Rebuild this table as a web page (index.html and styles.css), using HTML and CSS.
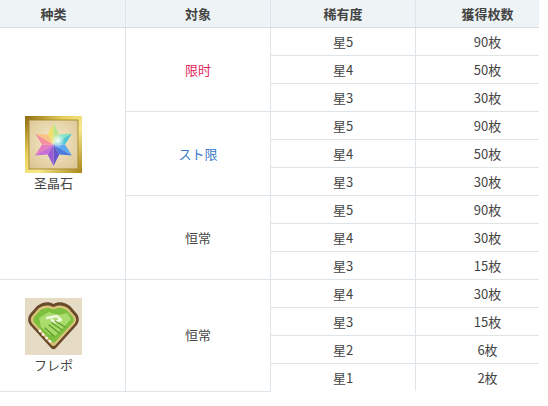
FILE: index.html
```html
<!DOCTYPE html>
<html lang="zh">
<head>
<meta charset="utf-8">
<link rel="stylesheet" href="styles.css">
</head>
<body>
<div class="wrap">
<table class="tbl">
<colgroup><col class="c1"><col class="c2"><col class="c3"><col class="c4"></colgroup>
<thead>
<tr><th>种类</th><th>対象</th><th>稀有度</th><th>獲得枚数</th></tr>
</thead>
<tbody>
<tr>
<td rowspan="9" class="item">
<div class="icon">
<svg width="57" height="57" viewBox="0 0 57 57">
<defs>
<linearGradient id="gold" x1="0" y1="0" x2="1" y2="1">
<stop offset="0" stop-color="#8a6a12"/><stop offset="0.35" stop-color="#e8cf5a"/><stop offset="0.6" stop-color="#f7e98e"/><stop offset="1" stop-color="#a88414"/>
</linearGradient>
<radialGradient id="bg1" cx="0.5" cy="0.45" r="0.7">
<stop offset="0" stop-color="#f6ecd0"/><stop offset="1" stop-color="#dcc592"/>
</radialGradient>
<radialGradient id="shine" cx="0.58" cy="0.45" r="0.3">
<stop offset="0" stop-color="#ffffff" stop-opacity="0.95"/><stop offset="1" stop-color="#ffffff" stop-opacity="0"/>
</radialGradient>
</defs>
<rect x="0" y="0" width="57" height="57" fill="url(#gold)"/>
<rect x="4" y="4" width="49" height="49" fill="url(#bg1)"/>
<rect x="4" y="4" width="49" height="49" fill="none" stroke="#9c7e22" stroke-width="0.8"/>
<g>
<polygon points="28.5,7 22.7,18.5 28.5,28.5" fill="#efe06e"/>
<polygon points="28.5,7 34.3,18.5 28.5,28.5" fill="#b6e58c"/>
<polygon points="47,17.5 34.3,18.5 28.5,28.5" fill="#86e2c4"/>
<polygon points="47,17.5 40,28.5 28.5,28.5" fill="#4cc6d6"/>
<polygon points="47,39.5 40,28.5 28.5,28.5" fill="#5aa8ee"/>
<polygon points="47,39.5 34.3,38.5 28.5,28.5" fill="#4a7ce0"/>
<polygon points="28.5,50 34.3,38.5 28.5,28.5" fill="#6656cc"/>
<polygon points="28.5,50 22.7,38.5 28.5,28.5" fill="#9a5cd2"/>
<polygon points="10,39.5 22.7,38.5 28.5,28.5" fill="#c46ed6"/>
<polygon points="10,39.5 17,28.5 28.5,28.5" fill="#e47cc0"/>
<polygon points="10,17.5 17,28.5 28.5,28.5" fill="#f290a0"/>
<polygon points="10,17.5 22.7,18.5 28.5,28.5" fill="#f7c284"/>
<circle cx="31" cy="26" r="12" fill="url(#shine)"/>
</g>
</svg>
</div>
<div class="name">圣晶石</div>
</td>
<td rowspan="3" class="gen red">限时</td><td>星5</td><td>90枚</td>
</tr>
<tr><td>星4</td><td>50枚</td></tr>
<tr><td>星3</td><td>30枚</td></tr>
<tr><td rowspan="3" class="gen blue">スト限</td><td>星5</td><td>90枚</td></tr>
<tr><td>星4</td><td>50枚</td></tr>
<tr><td>星3</td><td>30枚</td></tr>
<tr><td rowspan="3" class="gen">恒常</td><td>星5</td><td>90枚</td></tr>
<tr><td>星4</td><td>30枚</td></tr>
<tr><td>星3</td><td>15枚</td></tr>
<tr>
<td rowspan="4" class="item">
<div class="icon">
<svg width="57" height="57" viewBox="0 0 57 57">
<rect x="0" y="0" width="57" height="57" fill="#e6dcc6"/>
<path d="M28.5 6 C33 3 40 4 45 8 L52 16 C55 20 54 25 51 28 L31 50 C29.5 51.7 27.5 51.7 26 50 L6 28 C3 25 2 20 5 16 L12 8 C17 4 24 3 28.5 6 Z" fill="#6b4a2c"/>
<path d="M28.5 9 C33 6.5 39 7 43.5 10.5 L49.5 17.5 C52 20.5 51.5 24 49 26.5 L30.5 47 C29.3 48.3 27.7 48.3 26.5 47 L8 26.5 C5.5 24 5 20.5 7.5 17.5 L13.5 10.5 C18 7 24 6.5 28.5 9 Z" fill="#d9c37a"/>
<path d="M28.5 11.5 C33 9 38.5 9.5 42 12.5 L47.5 18.5 C49.5 21 49 23.5 47 25.5 L30 44 C29 45 28 45 27 44 L10 25.5 C8 23.5 7.5 21 9.5 18.5 L15 12.5 C18.5 9.5 24 9 28.5 11.5 Z" fill="#7cc03e"/>
<path d="M14 20 L24 14 L33 17 L42 15 L46 21 L38 30 L30 38 L24 36 L16 29 Z" fill="#a9dc6c"/>
<path d="M22 20 L32 18 L36 22 L30 24 L27 22" fill="none" stroke="#f2f8e0" stroke-width="2.5" stroke-linecap="round" stroke-linejoin="round"/>
<path d="M24 27 L34 35 M27 25 L37 32 M30 23 L40 29 M20 30 L29 38" stroke="#5e9a2a" stroke-width="1.4" stroke-linecap="round"/>
<circle cx="15" cy="33" r="1.3" fill="#fff"/><circle cx="18" cy="36.5" r="1.3" fill="#fff"/><circle cx="21.5" cy="40" r="1.3" fill="#fff"/><circle cx="25" cy="43.2" r="1.3" fill="#fff"/>
</svg>
</div>
<div class="name">フレポ</div>
</td>
<td rowspan="4" class="gen">恒常</td><td>星4</td><td>30枚</td>
</tr>
<tr><td>星3</td><td>15枚</td></tr>
<tr><td>星2</td><td>6枚</td></tr>
<tr><td>星1</td><td>2枚</td></tr>
</tbody>
</table>
</div>
</body>
</html>
```
FILE: styles.css
```css
html, body {
  margin: 0;
  padding: 0;
  background: #ffffff;
}
.wrap {
  width: 539px;
  overflow: hidden;
}
.tbl {
  margin-left: -19px;
  width: 578px;
  table-layout: fixed;
  border-collapse: collapse;
  font-family: "Noto Sans CJK SC", "Noto Sans", sans-serif;
  font-size: 13px;
  color: #444;
}
.c1 { width: 144px; }
.c2 { width: 145px; }
.c3 { width: 145px; }
.c4 { width: 144px; }
.tbl th, .tbl td {
  border: 1px solid #dde5ea;
  padding: 0;
  text-align: center;
  vertical-align: middle;
  height: 27px;
  line-height: 16px;
}
.tbl th {
  background: #eef4f6;
  font-weight: bold;
  color: #444;
  border-top: none;
  border-bottom-color: #d4dde2;
}
.tbl tbody tr:last-child td {
  border-bottom: none;
}
.tbl td.item {
  border-bottom: 1px solid #dde5ea;
}
.red { color: #e0245e; }
.blue { color: #3a78c8; }
.icon {
  display: flex;
  justify-content: center;
  line-height: 0;
}
.name {
  margin-top: 1px;
  line-height: 17px;
  color: #444;
}
```
